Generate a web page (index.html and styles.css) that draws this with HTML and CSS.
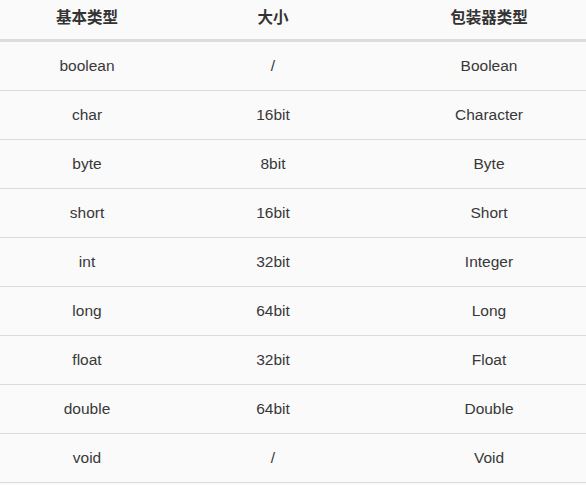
FILE: index.html
```html
<!DOCTYPE html>
<html lang="zh">
<head>
<meta charset="utf-8">
<link rel="stylesheet" href="styles.css">
</head>
<body>
<div class="table">
  <div class="row head">
    <div class="cell">基本类型</div>
    <div class="cell">大小</div>
    <div class="cell">包装器类型</div>
  </div>
  <div class="row"><div class="cell">boolean</div><div class="cell">/</div><div class="cell">Boolean</div></div>
  <div class="row"><div class="cell">char</div><div class="cell">16bit</div><div class="cell">Character</div></div>
  <div class="row"><div class="cell">byte</div><div class="cell">8bit</div><div class="cell">Byte</div></div>
  <div class="row"><div class="cell">short</div><div class="cell">16bit</div><div class="cell">Short</div></div>
  <div class="row"><div class="cell">int</div><div class="cell">32bit</div><div class="cell">Integer</div></div>
  <div class="row"><div class="cell">long</div><div class="cell">64bit</div><div class="cell">Long</div></div>
  <div class="row"><div class="cell">float</div><div class="cell">32bit</div><div class="cell">Float</div></div>
  <div class="row"><div class="cell">double</div><div class="cell">64bit</div><div class="cell">Double</div></div>
  <div class="row"><div class="cell">void</div><div class="cell">/</div><div class="cell">Void</div></div>
</div>
</body>
</html>
```
FILE: styles.css
```css
html, body {
  margin: 0;
  padding: 0;
  background: #fafafa;
  overflow: hidden;
}
body {
  width: 586px;
  height: 485px;
  font-family: "Liberation Sans", Arial, "Noto Sans CJK SC", sans-serif;
  color: #383838;
}
.table {
  width: 606px;
  display: flex;
  flex-direction: column;
}
.row {
  display: grid;
  grid-template-columns: 174px 198px 234px;
  height: 48px;
  border-bottom: 1px solid #dcdcdc;
  font-size: 15.5px;
}
.row.head {
  height: 39px;
  border-bottom: 3px solid #dcdcdc;
  font-size: 15.5px;
  font-weight: bold;
  font-family: "Noto Sans CJK SC", sans-serif;
  color: #333;
}
.cell {
  display: flex;
  align-items: center;
  justify-content: center;
}
.head .cell {
  padding-bottom: 8px;
}
```
